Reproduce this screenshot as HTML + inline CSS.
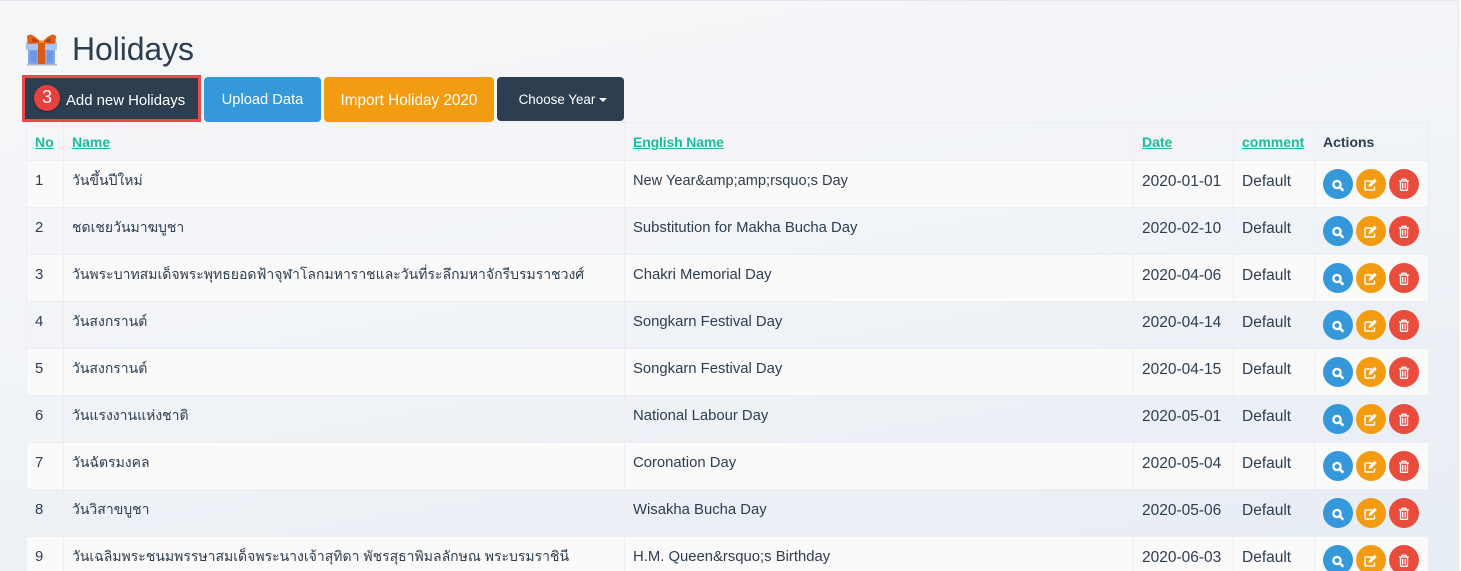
<!DOCTYPE html>
<html><head><meta charset="utf-8">
<style>
html,body{margin:0;padding:0;width:1461px;height:571px;overflow:hidden}
#p{position:absolute;left:0;top:0;width:1461px;height:571px;overflow:hidden;background:linear-gradient(170deg,#f5f6f8 0%,#f3f5f8 35%,#e7edf5 100%);font-family:"Liberation Sans",sans-serif;color:#2c3e50;font-size:15px}
.top{position:absolute;left:0;top:0;width:1461px;height:1px;background:#e4e6e9}
.line{position:absolute;left:1458px;top:0;width:1px;height:571px;background:#e4e6e9}
.right{position:absolute;left:1459px;top:0;width:2px;height:571px;background:#fff}
h1{position:absolute;left:72px;top:29px;margin:0;font-weight:400;font-size:32px;line-height:40px;letter-spacing:-.1px;color:#2c3e50}
.btn{position:absolute;top:77px;height:45px;line-height:47px;color:#fff;text-align:center;border-radius:4px;box-sizing:border-box;white-space:nowrap}
.badge{position:absolute;left:34px;top:85px;width:26px;height:26px;border-radius:50%;background:#e8403f;color:#fff;text-align:center;line-height:25px;font-size:18px;box-shadow:0 1px 2px rgba(0,0,0,.4)}
.caret{display:inline-block;width:0;height:0;border-top:4px solid #fff;border-left:4px solid transparent;border-right:4px solid transparent;vertical-align:middle;margin-left:4px}
table{position:absolute;left:26px;top:122px;width:1402px;border-collapse:collapse;table-layout:fixed}
th,td{border:1px solid #eceef1;padding:0 0 0 8px;text-align:left;white-space:nowrap;overflow:hidden;vertical-align:top}
th{height:37px;line-height:37px;font-weight:700;font-size:14px}
th a,th span{position:relative;top:1px}
th a{color:#1abc9c;text-decoration:underline}
td{height:46px;line-height:41px;font-size:14.85px}
td.t{font-size:14px;line-height:39px;font-family:"Liberation Sans","DejaVu Sans",sans-serif}
td.d{font-size:15.5px}
tr.o td{background:#fafafa}
.a{position:relative}
td.a{overflow:visible;padding:0}
.c{position:absolute;top:8px;width:30px;height:30px;border-radius:50%}
.c svg{position:absolute;left:7px;top:7px;width:16px;height:16px}
.b1{left:8px;background:#3498db}.b2{left:41px;background:#f39c12}.b3{left:74px;background:#e74c3c}
</style></head><body>
<div id="p">
<svg width="0" height="0" style="position:absolute">
<symbol id="s" viewBox="0 0 16 16"><circle cx="7" cy="8.500" r="3.600" fill="none" stroke="#fff" stroke-width="2.400"/><path d="M9.800 11.300l3.600 3.400" stroke="#fff" stroke-width="2.600" fill="none"/></symbol>
<symbol id="e" viewBox="0 0 16 16"><path d="M11.500 10.500v2.500a1 1 0 0 1-1 1H3a1 1 0 0 1-1-1V6a1 1 0 0 1 1-1h6" fill="none" stroke="#fff" stroke-width="1.400"/><path d="M5.500 11l.6-2.800L11.600 2.800l2.200 2.200-5.500 5.400z" fill="#fff"/></symbol>
<symbol id="t" viewBox="0 0 16 16"><path d="M3 5h10M6 5V3.300h4V5M4.500 5.500v8a.8.8 0 0 0 .8.8h5.400a.8.8 0 0 0 .8-.8v-8M6.700 7v5.500M9.300 7v5.500" fill="none" stroke="#fff" stroke-width="1.300"/></symbol>
</svg>
<div class="top"></div><div class="line"></div><div class="right"></div>
<svg style="position:absolute;left:25px;top:33px" width="33" height="33" viewBox="0 0 33 33">
<rect x="2" y="31" width="30" height="1.500" fill="#b4b8c4"/>
<rect x="3" y="16" width="27" height="15" fill="#7fa8ec"/>
<rect x="5" y="18" width="7" height="11" fill="#6f98e2"/>
<rect x="22" y="18" width="6" height="11" fill="#6f98e2"/>
<rect x="1" y="9" width="31" height="8" fill="#a8c5f2"/>
<path d="M16 9.500C12 5 9 2 4.500 1.500L2 3l.5 7.500c4 .8 9 .5 13.500-1zM17 9.500c4-4.500 7-7.500 11.500-8L31 3l-.5 7.500c-4 .8-9 .5-13.500-1z" fill="#e2601a"/>
<path d="M7 5c3 .5 5 2 7 4-2.500.2-5 .2-7-.2zM26 5c-3 .5-5 2-7 4 2.500.2 5 .2 7-.2z" fill="#b8440e"/>
<rect x="14" y="7.500" width="5" height="3" fill="#f58a3a"/>
<rect x="13" y="10" width="7" height="21" fill="#dc5a12"/>
</svg>
<h1>Holidays</h1>
<div class="btn" style="left:22px;top:75px;width:179px;height:47px;background:#2c3e50;border:3px solid #e74c4c;border-radius:0;line-height:46px;padding-left:41px;text-align:left;font-size:14.9px">Add new Holidays</div>
<div class="badge">3</div>
<div class="btn" style="left:204px;width:117px;background:#3498db;font-size:14.7px">Upload Data</div>
<div class="btn" style="left:324px;width:170px;background:#f39c12;font-size:15.3px">Import Holiday 2020</div>
<div class="btn" style="left:497px;width:127px;height:44px;line-height:45px;background:#2c3e50;font-size:13.4px;padding-left:5px">Choose Year<span class="caret"></span></div>
<table>
<colgroup><col style="width:37px"><col style="width:561px"><col style="width:509px"><col style="width:100px"><col style="width:81px"><col style="width:114px"></colgroup>
<tr><th><a>No</a></th><th><a>Name</a></th><th><a style="letter-spacing:-.15px">English Name</a></th><th><a>Date</a></th><th><a>comment</a></th><th><span>Actions</span></th></tr>
<tr class="o"><td>1</td><td class="t">วันขึ้นปีใหม่</td><td style="font-size:14.6px">New Year&amp;amp;amp;rsquo;s Day</td><td class="d">2020-01-01</td><td class="d">Default</td><td class="a"><i class="c b1"><svg><use href="#s"/></svg></i><i class="c b2"><svg><use href="#e"/></svg></i><i class="c b3"><svg><use href="#t"/></svg></i></td></tr>
<tr class="e"><td>2</td><td class="t">ชดเชยวันมาฆบูชา</td><td>Substitution for Makha Bucha Day</td><td class="d">2020-02-10</td><td class="d">Default</td><td class="a"><i class="c b1"><svg><use href="#s"/></svg></i><i class="c b2"><svg><use href="#e"/></svg></i><i class="c b3"><svg><use href="#t"/></svg></i></td></tr>
<tr class="o"><td>3</td><td class="t">วันพระบาทสมเด็จพระพุทธยอดฟ้าจุฬาโลกมหาราชและวันที่ระลึกมหาจักรีบรมราชวงศ์</td><td>Chakri Memorial Day</td><td class="d">2020-04-06</td><td class="d">Default</td><td class="a"><i class="c b1"><svg><use href="#s"/></svg></i><i class="c b2"><svg><use href="#e"/></svg></i><i class="c b3"><svg><use href="#t"/></svg></i></td></tr>
<tr class="e"><td>4</td><td class="t">วันสงกรานต์</td><td>Songkarn Festival Day</td><td class="d">2020-04-14</td><td class="d">Default</td><td class="a"><i class="c b1"><svg><use href="#s"/></svg></i><i class="c b2"><svg><use href="#e"/></svg></i><i class="c b3"><svg><use href="#t"/></svg></i></td></tr>
<tr class="o"><td>5</td><td class="t">วันสงกรานต์</td><td>Songkarn Festival Day</td><td class="d">2020-04-15</td><td class="d">Default</td><td class="a"><i class="c b1"><svg><use href="#s"/></svg></i><i class="c b2"><svg><use href="#e"/></svg></i><i class="c b3"><svg><use href="#t"/></svg></i></td></tr>
<tr class="e"><td>6</td><td class="t">วันแรงงานแห่งชาติ</td><td>National Labour Day</td><td class="d">2020-05-01</td><td class="d">Default</td><td class="a"><i class="c b1"><svg><use href="#s"/></svg></i><i class="c b2"><svg><use href="#e"/></svg></i><i class="c b3"><svg><use href="#t"/></svg></i></td></tr>
<tr class="o"><td>7</td><td class="t">วันฉัตรมงคล</td><td>Coronation Day</td><td class="d">2020-05-04</td><td class="d">Default</td><td class="a"><i class="c b1"><svg><use href="#s"/></svg></i><i class="c b2"><svg><use href="#e"/></svg></i><i class="c b3"><svg><use href="#t"/></svg></i></td></tr>
<tr class="e"><td>8</td><td class="t">วันวิสาขบูชา</td><td>Wisakha Bucha Day</td><td class="d">2020-05-06</td><td class="d">Default</td><td class="a"><i class="c b1"><svg><use href="#s"/></svg></i><i class="c b2"><svg><use href="#e"/></svg></i><i class="c b3"><svg><use href="#t"/></svg></i></td></tr>
<tr class="o"><td>9</td><td class="t">วันเฉลิมพระชนมพรรษาสมเด็จพระนางเจ้าสุทิดา พัชรสุธาพิมลลักษณ พระบรมราชินี</td><td>H.M. Queen&amp;rsquo;s Birthday</td><td class="d">2020-06-03</td><td class="d">Default</td><td class="a"><i class="c b1"><svg><use href="#s"/></svg></i><i class="c b2"><svg><use href="#e"/></svg></i><i class="c b3"><svg><use href="#t"/></svg></i></td></tr>
</table>
</div>
</body></html>
